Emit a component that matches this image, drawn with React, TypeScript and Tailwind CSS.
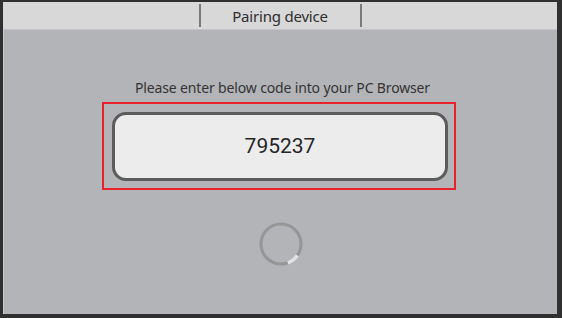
import React from "react";

function Spinner() {
  const r = 20;
  const cx = 22;
  const cy = 22;
  const a1 = (35 * Math.PI) / 180;
  const a2 = (70 * Math.PI) / 180;
  const x1 = cx + r * Math.cos(a1);
  const y1 = cy + r * Math.sin(a1);
  const x2 = cx + r * Math.cos(a2);
  const y2 = cy + r * Math.sin(a2);
  return (
    <svg width="44" height="44" viewBox="0 0 44 44">
      <circle cx={cx} cy={cy} r={r} fill="none" stroke="#959696" strokeWidth="3" />
      <path d={`M ${x1} ${y1} A ${r} ${r} 0 0 1 ${x2} ${y2}`} fill="none" stroke="#e4e4e4" strokeWidth="3.5" />
    </svg>
  );
}

export default function App() {
  return (
    <div className="w-[562px] h-[318px] bg-[#303030] pt-[2px] pl-[3px] pr-[5px] pb-[4px]">
      <div className="w-full h-full flex flex-col" style={{ fontFamily: '"Noto Sans", sans-serif' }}>
        <div className="h-[28px] bg-[#d8d8d9] border-b border-[#c4c5c7] flex items-center justify-center">
          <div className="w-[2px] h-[23px] bg-[#7a7a7a]" />
          <div className="w-[159px] text-center text-[15px] leading-[20px] text-[#2e2e2e] tracking-[-0.2px]">
            Pairing device
          </div>
          <div className="w-[2px] h-[23px] bg-[#7a7a7a]" />
        </div>
        <div className="flex-1 bg-[#b3b4b8] border-l border-[#c9cacc] flex flex-col items-center pt-[48px]">
          <div className="ml-[4px] text-[14px] leading-[20px] text-[#333333] tracking-[-0.15px]">
            Please enter below code into your PC Browser
          </div>
          <div className="mt-[4px] mr-[3px] w-[354px] h-[88px] border-2 border-[#e8212b] pl-[8px] pr-[6px] pt-[8px] pb-[7px]">
            <div
              className="w-full h-full rounded-[14px] border-[3px] border-[#5c5c5c] bg-[#ececec] flex items-center justify-center text-[21px] text-[#262626]"
              style={{ fontFamily: 'Roboto, sans-serif' }}
            >
              795237
            </div>
          </div>
          <div className="mt-[32px]">
            <Spinner />
          </div>
        </div>
      </div>
    </div>
  );
}
